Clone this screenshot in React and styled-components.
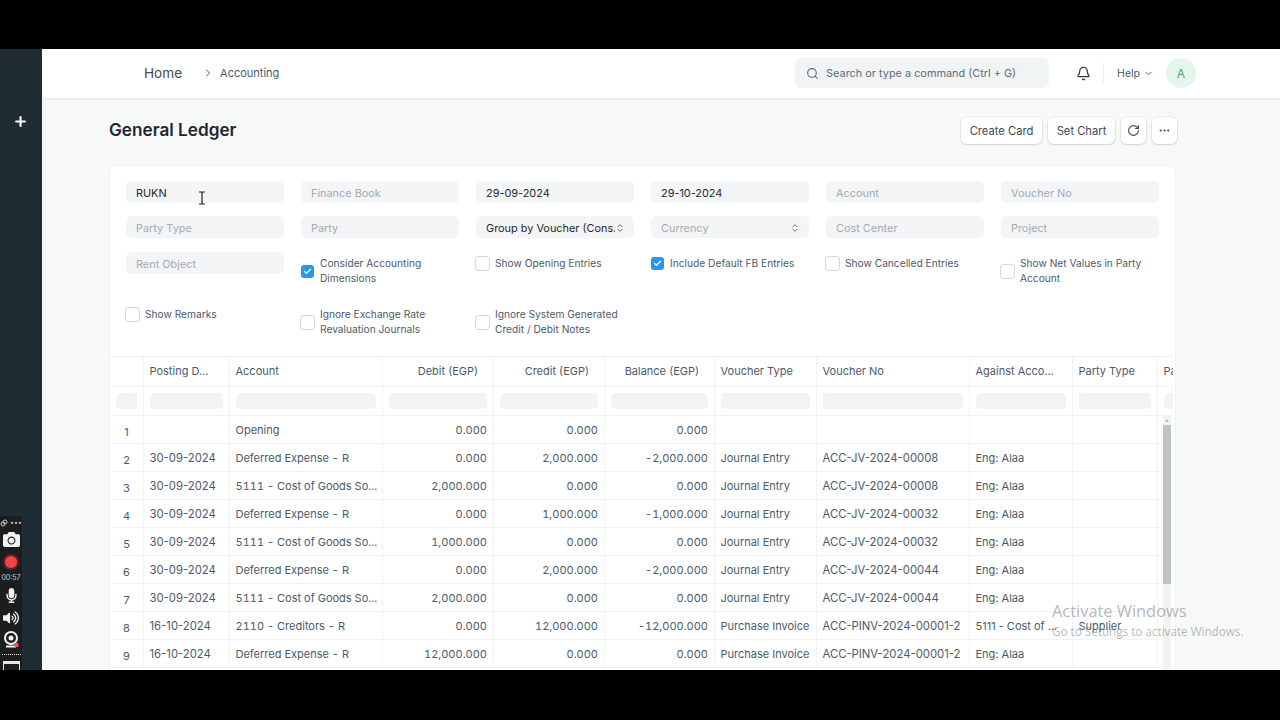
import React from 'react';
import styled, { createGlobalStyle } from 'styled-components';
import { Search, Bell, ChevronDown, ChevronRight, RotateCw, MoreHorizontal, Plus, ChevronsUpDown, Check } from 'lucide-react';
import { FaCamera, FaMicrophone, FaVolumeUp } from 'react-icons/fa';

const GlobalStyle = createGlobalStyle`
  html, body { margin: 0; padding: 0; background: #000; }
  * { box-sizing: border-box; }
  body { font-family: Inter, "Liberation Sans", sans-serif; }
`;

const Frame = styled.div`
  position: relative;
  width: 1280px;
  height: 720px;
  padding: 49px 0 50px;
  background: #000;
  overflow: hidden;
`;
const Screen = styled.div`
  display: flex;
  height: 621px;
  overflow: hidden;
  background: #f7f9f9;
`;
const Sidebar = styled.aside`
  position: relative;
  flex: 0 0 42px;
  display: flex;
  justify-content: center;
  padding: 65px 2px 0 0;
  background: #1f2c33;
  color: #f4f6f6;
`;
const Recorder = styled.div`
  position: absolute;
  left: 0;
  bottom: 0;
  width: 22px;
  height: 154px;
  display: flex;
  flex-direction: column;
  align-items: center;
  padding-top: 3px;
  background: #1c1d1e;
  border-radius: 0 4px 0 0;
  color: #f2f2f2;
  overflow: hidden;
`;
const RecorderTop = styled.div`
  display: flex;
  gap: 2px;
  align-items: center;
  height: 8px;
  font-size: 7px;
  line-height: 8px;
  color: #bbb;
`;
const RecorderSlot = styled.div`
  flex: none;
  display: flex;
  align-items: center;
  justify-content: center;
  height: ${({ $h }) => $h}px;
`;
const RecordDot = styled.div`
  width: 12px;
  height: 12px;
  border-radius: 50%;
  background: #f4424c;
  box-shadow: 0 0 0 2px #5e2226;
`;
const RecorderTime = styled.div`
  flex: none;
  font-size: 7px;
  line-height: 10px;
  color: #c8c8c8;
`;
const DottedLine = styled.div`
  flex: none;
  width: 19px;
  margin: 3px 0 6px;
  border-top: 1px dotted #e6e6e6;
`;
const WindowGlyph = styled.div`
  flex: none;
  width: 17px;
  height: 14px;
  border: 1.5px solid #e6e6e6;
  border-top-width: 3px;
`;
const Content = styled.main`
  flex: 1;
  min-width: 0;
`;
const Navbar = styled.header`
  display: flex;
  align-items: center;
  height: 49px;
  padding: 0 84px 1px 102px;
  background: #fff;
  box-shadow: 0 1px 2px rgba(25, 39, 52, 0.1);
  color: #4c5a67;
`;
const HomeLink = styled.span`
  font-size: 13.6px;
  color: #3f4a54;
`;
const Crumb = styled.span`
  display: flex;
  align-items: center;
  gap: 6px;
  margin-left: 20px;
  font-size: 11px;
  color: #4c5a67;
`;
const SearchBox = styled.div`
  display: flex;
  align-items: center;
  gap: 7px;
  width: 254px;
  height: 30px;
  margin-left: auto;
  padding-left: 11px;
  background: #f1f4f5;
  border-radius: 6px;
  font-size: 10.9px;
  color: #5f6c78;
`;
const BellWrap = styled.span`
  display: flex;
  margin-left: 27px;
  color: #2f3b45;
`;
const NavDivider = styled.span`
  width: 1px;
  height: 22px;
  margin: 0 13px 0 12px;
  background: #eef0f2;
`;
const HelpMenu = styled.span`
  display: flex;
  align-items: center;
  gap: 3px;
  font-size: 10.5px;
  color: #4c5a67;
`;
const Avatar = styled.span`
  display: flex;
  align-items: center;
  justify-content: center;
  width: 30px;
  height: 30px;
  margin-left: 12px;
  border-radius: 50%;
  background: #e4f5e9;
  color: #48a66b;
  font-size: 12px;
`;
const PageHead = styled.div`
  display: flex;
  align-items: center;
  justify-content: space-between;
  height: 67px;
  padding: 19px 103px 21px 67px;
`;
const Title = styled.h1`
  margin: 0 0 2px;
  font-size: 17.2px;
  font-weight: 600;
  color: #1f272e;
`;
const Actions = styled.div`
  display: flex;
  gap: 6px;
`;
const ActionButton = styled.button`
  display: flex;
  align-items: center;
  justify-content: center;
  height: 27px;
  width: ${({ $w }) => $w}px;
  padding: 0;
  border: 0;
  border-radius: 6px;
  background: #fff;
  box-shadow: 0 0 0 1px rgba(25, 39, 52, 0.06), 0 1px 2px rgba(25, 39, 52, 0.12);
  font-family: inherit;
  font-size: 11.2px;
  color: #3d4852;
`;
const Card = styled.section`
  width: 1067px;
  height: 600px;
  margin-left: 67px;
  background: #fff;
  border: 1px solid #f0f2f3;
  border-radius: 8px 8px 0 0;
`;
const Filters = styled.div`
  display: grid;
  grid-template-columns: repeat(6, 158px);
  grid-template-rows: 22px 23px 38px 33px;
  column-gap: 17px;
  row-gap: 13px;
  padding: 15px 16px 20px;
`;
const Field = styled.div`
  display: flex;
  align-items: center;
  justify-content: space-between;
  height: 22px;
  padding: 1px 9px 0 10px;
  background: #f3f5f6;
  border-radius: 5px;
  font-size: 10.9px;
  white-space: nowrap;
  color: ${({ $value }) => ($value ? '#1f272e' : '#a3abb3')};
`;
const FieldText = styled.span`
  overflow: hidden;
`;
const SelectIcon = styled(ChevronsUpDown)`
  flex: none;
  color: #4c5a67;
`;
const CheckField = styled.label`
  display: flex;
  align-items: center;
  align-self: start;
  gap: 6px;
  padding-top: 4px;
  font-size: 10.2px;
  line-height: 15px;
  color: #4c5a67;
`;
const CheckBox = styled.span`
  flex: 0 0 13px;
  display: flex;
  align-items: center;
  justify-content: center;
  width: 13px;
  height: 13px;
  border-radius: 3px;
  color: #fff;
  background: ${({ $on }) => ($on ? '#2e95e8' : '#fff')};
  box-shadow: ${({ $on }) => ($on ? 'none' : '0 0 0 1px #d5d9dd, 0 1px 1px rgba(0, 0, 0, 0.06)')};
`;
const CheckText = styled.span`
  white-space: pre-line;
`;
const TableBox = styled.div`
  width: 1063px;
  border-top: 1px solid #eef0f2;
  font-size: 11px;
  color: #4c5a67;
`;
const COLUMNS = '34px 86px 153px 111px 111px 110px 102px 153px 103px 85px 40px';
const Row = styled.div`
  display: grid;
  grid-template-columns: ${COLUMNS};
  height: ${({ $h }) => $h}px;
  border-bottom: 1px solid #f0f2f3;
  overflow: hidden;
`;
const Cell = styled.div`
  display: flex;
  align-items: center;
  justify-content: ${({ $right }) => ($right ? 'flex-end' : 'flex-start')};
  padding: 0 ${({ $head, $right }) => ($head && $right ? '15px' : '6px')} ${({ $head }) => ($head ? '2px' : '0')} 5.5px;
  border-right: 1px solid #f0f2f3;
  font-size: ${({ $code }) => ($code ? '11.3px' : 'inherit')};
  font-variant-numeric: ${({ $tnum }) => ($tnum ? 'tabular-nums' : 'normal')};
  white-space: nowrap;
  overflow: hidden;
`;
const IndexCell = styled(Cell)`
  justify-content: center;
  padding: 4px 0 0;
`;
const FilterPill = styled.div`
  width: 100%;
  height: 16px;
  background: #f1f3f4;
  border-radius: 5px;
`;
const TableBody = styled.div`
  display: flex;
`;
const Rows = styled.div`
  width: 1050px;
  overflow: hidden;
`;
const ScrollTrack = styled.div`
  flex: 0 0 8px;
  display: flex;
  flex-direction: column;
  align-items: center;
  height: 254px;
  margin-left: 3px;
  padding-top: 3px;
  background: #f0f2f3;
`;
const ScrollArrow = styled.div`
  width: 0;
  height: 0;
  margin-bottom: 3px;
  border: 2.5px solid transparent;
  border-top: 0;
  border-bottom: 3px solid #b4bcc2;
`;
const ScrollThumb = styled.div`
  width: 100%;
  height: 159px;
  background: #bcc4ca;
`;
const Watermark = styled.div`
  position: absolute;
  left: 1052px;
  top: 601px;
  color: rgba(118, 124, 128, 0.55);
  font-family: "Open Sans", sans-serif;
  pointer-events: none;
`;
const WatermarkTitle = styled.div`
  font-size: 16.4px;
  line-height: 20px;
`;
const WatermarkSub = styled.div`
  font-size: 11.7px;
  line-height: 20px;
`;
const TextCursor = styled.svg`
  position: absolute;
  left: 198px;
  top: 191px;
`;

const FILTER_ROWS = [
  { label: 'RUKN', value: true },
  { label: 'Finance Book' },
  { label: '29-09-2024', value: true },
  { label: '29-10-2024', value: true },
  { label: 'Account' },
  { label: 'Voucher No' },
  { label: 'Party Type' },
  { label: 'Party' },
  { label: 'Group by Voucher (Cons.', value: true, select: true },
  { label: 'Currency', select: true },
  { label: 'Cost Center' },
  { label: 'Project' },
  { label: 'Rent Object' },
  { check: 'Consider Accounting\nDimensions', on: true },
  { check: 'Show Opening Entries' },
  { check: 'Include Default FB Entries', on: true },
  { check: 'Show Cancelled Entries' },
  { check: 'Show Net Values in Party\nAccount' },
  { check: 'Show Remarks' },
  { check: 'Ignore Exchange Rate\nRevaluation Journals' },
  { check: 'Ignore System Generated\nCredit / Debit Notes' },
];

const HEADERS = [
  ['', false],
  ['Posting D...', false],
  ['Account', false],
  ['Debit (EGP)', true],
  ['Credit (EGP)', true],
  ['Balance (EGP)', true],
  ['Voucher Type', false],
  ['Voucher No', false],
  ['Against Acco...', false],
  ['Party Type', false],
  ['Party', false],
];

const DEFERRED = 'Deferred Expense - R';
const COGS = '5111 - Cost of Goods So...';
const JE = 'Journal Entry';
const PI = 'Purchase Invoice';
const ALAA = 'Eng: Alaa';

const LEDGER = [
  ['', 'Opening', '0.000', '0.000', '0.000', '', '', '', ''],
  ['30-09-2024', DEFERRED, '0.000', '2,000.000', '-2,000.000', JE, 'ACC-JV-2024-00008', ALAA, ''],
  ['30-09-2024', COGS, '2,000.000', '0.000', '0.000', JE, 'ACC-JV-2024-00008', ALAA, ''],
  ['30-09-2024', DEFERRED, '0.000', '1,000.000', '-1,000.000', JE, 'ACC-JV-2024-00032', ALAA, ''],
  ['30-09-2024', COGS, '1,000.000', '0.000', '0.000', JE, 'ACC-JV-2024-00032', ALAA, ''],
  ['30-09-2024', DEFERRED, '0.000', '2,000.000', '-2,000.000', JE, 'ACC-JV-2024-00044', ALAA, ''],
  ['30-09-2024', COGS, '2,000.000', '0.000', '0.000', JE, 'ACC-JV-2024-00044', ALAA, ''],
  ['16-10-2024', '2110 - Creditors - R', '0.000', '12,000.000', '-12,000.000', PI, 'ACC-PINV-2024-00001-2', '5111 - Cost of ...', 'Supplier'],
  ['16-10-2024', DEFERRED, '12,000.000', '0.000', '0.000', PI, 'ACC-PINV-2024-00001-2', ALAA, ''],
];

function isAmount(i) {
  return i >= 2 && i <= 4;
}

export default function App() {
  return (
    <Frame>
      <GlobalStyle />
      <Screen>
        <Sidebar>
          <Plus size={15} strokeWidth={3.5} />
          <Recorder>
            <RecorderTop>
              <svg width="8" height="8" viewBox="0 0 8 8" fill="none" stroke="#ccc" strokeWidth="1">
                <circle cx="3" cy="5" r="2" />
                <circle cx="5" cy="3" r="2" />
              </svg>
              <span>•••</span>
            </RecorderTop>
            <RecorderSlot $h={24}>
              <FaCamera size={17} />
            </RecorderSlot>
            <RecorderSlot $h={22}>
              <RecordDot />
            </RecorderSlot>
            <RecorderTime>00:57</RecorderTime>
            <RecorderSlot $h={24}>
              <FaMicrophone size={15} />
            </RecorderSlot>
            <RecorderSlot $h={22}>
              <FaVolumeUp size={16} />
            </RecorderSlot>
            <RecorderSlot $h={22}>
              <svg width="16" height="18" viewBox="0 0 16 18" fill="none">
                <circle cx="8" cy="7" r="6" stroke="#f2f2f2" strokeWidth="2" />
                <circle cx="8" cy="7" r="2.5" fill="#f2f2f2" />
                <path d="M3 15.5h10" stroke="#f2f2f2" strokeWidth="2.2" />
                <circle cx="13.5" cy="14" r="2.2" fill="#f0505a" />
              </svg>
            </RecorderSlot>
            <DottedLine />
            <WindowGlyph />
          </Recorder>
        </Sidebar>
        <Content>
          <Navbar>
            <HomeLink>Home</HomeLink>
            <Crumb>
              <ChevronRight size={12} />
              Accounting
            </Crumb>
            <SearchBox>
              <Search size={13} />
              Search or type a command (Ctrl + G)
            </SearchBox>
            <BellWrap>
              <Bell size={15} />
            </BellWrap>
            <NavDivider />
            <HelpMenu>
              Help
              <ChevronDown size={11} />
            </HelpMenu>
            <Avatar>A</Avatar>
          </Navbar>
          <PageHead>
            <Title>General Ledger</Title>
            <Actions>
              <ActionButton $w={81}>Create Card</ActionButton>
              <ActionButton $w={67}>Set Chart</ActionButton>
              <ActionButton $w={25}>
                <RotateCw size={13} />
              </ActionButton>
              <ActionButton $w={25}>
                <MoreHorizontal size={13} />
              </ActionButton>
            </Actions>
          </PageHead>
          <Card>
            <Filters>
              {FILTER_ROWS.map((f, i) =>
                f.check ? (
                  <CheckField key={i}>
                    <CheckBox $on={f.on}>{f.on && <Check size={9} strokeWidth={3.5} />}</CheckBox>
                    <CheckText>{f.check}</CheckText>
                  </CheckField>
                ) : (
                  <Field key={i} $value={f.value}>
                    <FieldText>{f.label}</FieldText>
                    {f.select && <SelectIcon size={10} />}
                  </Field>
                )
              )}
            </Filters>
            <TableBox>
              <Row $h={30}>
                {HEADERS.map(([label, right], i) => (
                  <Cell key={i} $head $right={right}>
                    {label}
                  </Cell>
                ))}
              </Row>
              <Row $h={29}>
                {HEADERS.map((h, i) => (
                  <Cell key={i}>
                    <FilterPill />
                  </Cell>
                ))}
              </Row>
              <TableBody>
                <Rows>
                  {LEDGER.map((row, r) => (
                    <Row key={r} $h={28}>
                      <IndexCell>{r + 1}</IndexCell>
                      {row.map((text, i) => (
                        <Cell key={i} $right={isAmount(i)} $tnum={i >= 1 && i <= 4} $code={i === 0 || i === 6}>
                          {text}
                        </Cell>
                      ))}
                    </Row>
                  ))}
                </Rows>
                <ScrollTrack>
                  <ScrollArrow />
                  <ScrollThumb />
                </ScrollTrack>
              </TableBody>
            </TableBox>
          </Card>
        </Content>
      </Screen>
      <TextCursor width="8" height="14" viewBox="0 0 8 14" fill="none" stroke="#222" strokeWidth="1.2">
        <path d="M1 1h6M4 1v12M1 13h6" />
      </TextCursor>
      <Watermark>
        <WatermarkTitle>Activate Windows</WatermarkTitle>
        <WatermarkSub>Go to Settings to activate Windows.</WatermarkSub>
      </Watermark>
    </Frame>
  );
}
